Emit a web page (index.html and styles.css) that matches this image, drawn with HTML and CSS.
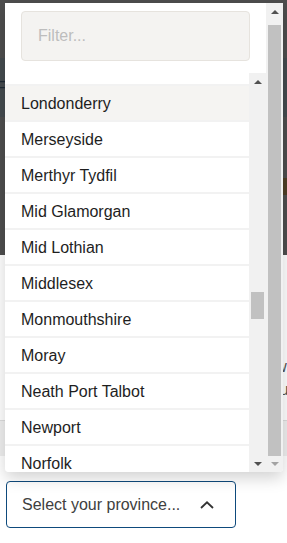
FILE: index.html
```html
<!DOCTYPE html>
<html lang="en">

<head>
    <meta charset="UTF-8">
    <meta name="viewport" content="width=device-width, initial-scale=1.0">
    <title>Province</title>
    <link rel="stylesheet" href="styles.css">
</head>

<body>
    <header class="hero">
        <div class="hero-band"><span class="hero-text">Free delivery on every order</span></div>
        <div class="hero-offer"><span class="hero-badge"></span></div>
    </header>

    <section class="content">
        <h2 class="content-title">Find your nearest store</h2>
        <p class="content-text">Choose a province from the list below and we<br>will show the shops that deliver to your area.</p>
        <div class="content-box"></div>
    </section>

    <div class="province">
        <div class="province-menu">
            <div class="menu-main">
                <input type="text" class="menu-filter" placeholder="Filter...">
                <div class="menu-list">
                    <ul class="menu-items">
                        <li class="menu-item menu-item-first">Lincolnshire</li>
                        <li class="menu-item is-active">Londonderry</li>
                        <li class="menu-item">Merseyside</li>
                        <li class="menu-item">Merthyr Tydfil</li>
                        <li class="menu-item">Mid Glamorgan</li>
                        <li class="menu-item">Mid Lothian</li>
                        <li class="menu-item">Middlesex</li>
                        <li class="menu-item">Monmouthshire</li>
                        <li class="menu-item">Moray</li>
                        <li class="menu-item">Neath Port Talbot</li>
                        <li class="menu-item">Newport</li>
                        <li class="menu-item">Norfolk</li>
                    </ul>
                    <div class="scrollbar scrollbar-inner">
                        <span class="scrollbar-btn"><span class="arrow-up"></span></span>
                        <span class="scrollbar-track"><span class="scrollbar-thumb"></span></span>
                        <span class="scrollbar-btn"><span class="arrow-down"></span></span>
                    </div>
                </div>
            </div>
            <div class="scrollbar scrollbar-outer">
                <span class="scrollbar-btn"><span class="arrow-up"></span></span>
                <span class="scrollbar-track"><span class="scrollbar-thumb"></span></span>
                <span class="scrollbar-btn"><span class="arrow-down is-disabled"></span></span>
            </div>
        </div>

        <button type="button" class="province-select">
            <span>Select your province...</span>
            <svg width="14" height="8" viewBox="0 0 14 8">
                <polyline points="1,7 7,1.3 13,7" fill="none" stroke="#333" stroke-width="1.8"/>
            </svg>
        </button>
    </div>
</body>

</html>
```

FILE: styles.css
```css
/* Página */
* {
    box-sizing: border-box;
    margin: 0;
    padding: 0;
}

body {
    font-family: "Liberation Sans", Arial, sans-serif;
    background-color: #fff;
    overflow: hidden;
}

/* Fundo */
.hero {
    height: 255px;
    background-color: #4e4e4e;
    padding-top: 58px;
}

.hero-band {
    height: 59px;
    background-color: #454b4f;
    display: flex;
    align-items: center;
    overflow: hidden;
    white-space: nowrap;
}

.hero-text {
    margin-left: -4px;
    font-size: 16px;
    color: #1e2a34;
}

.hero-offer {
    display: flex;
    justify-content: flex-end;
    margin-top: 61px;
}

.hero-badge {
    width: 40px;
    height: 17px;
    background-color: #4f3f26;
    border-left: 2px solid #8a6d35;
}

.content {
    height: 226px;
    padding: 68px 0 0 20px;
    overflow: hidden;
    white-space: nowrap;
    color: #222;
}

.content-title {
    font-size: 18px;
    line-height: 18px;
    font-weight: 700;
}

.content-text {
    margin-top: 14px;
    font-size: 16px;
    line-height: 23px;
    color: #555;
}

.content-box {
    margin: 19px 0 0 -20px;
    height: 36px;
    background-color: #efefef;
    border-top: 1px solid #dcdcdc;
}

/* Seletor */
.province {
    position: relative;
    padding-left: 6px;
}

.province-menu {
    position: absolute;
    left: 5px;
    bottom: calc(100% + 9px);
    width: 278px;
    height: 469px;
    display: flex;
    background-color: #fff;
    border-radius: 0 0 4px 4px;
    box-shadow: 0 6px 16px rgba(0, 0, 0, 0.18);
    overflow: hidden;
}

.menu-main {
    width: 261px;
    display: flex;
    flex-direction: column;
}

.menu-filter {
    margin: 8px 16px 12px;
    height: 50px;
    padding: 0 16px;
    background-color: #f4f3f1;
    border: 1px solid #e6e3de;
    border-radius: 4px;
    font-family: "Liberation Sans", Arial, sans-serif;
    font-size: 16px;
    color: #333;
    outline: none;
}

.menu-filter::placeholder {
    color: #bdbdbd;
}

.menu-list {
    flex: 1;
    min-height: 0;
    display: flex;
}

.menu-items {
    flex: 1;
    overflow: hidden;
    list-style: none;
    background-color: #f2f2f2;
}

.menu-item {
    height: 34px;
    margin-bottom: 2px;
    padding: 2px 0 0 16px;
    display: flex;
    align-items: center;
    background-color: #fff;
    font-size: 16px;
    color: #1e1e1e;
}

.menu-item-first {
    margin-top: -23px;
}

.menu-item.is-active {
    background-color: #f5f4f2;
}

/* Barras de rolagem */
.scrollbar {
    width: 17px;
    display: flex;
    flex-direction: column;
    background-color: #f1f1f1;
}

.scrollbar-btn {
    height: 17px;
    display: flex;
    align-items: center;
    justify-content: center;
}

.scrollbar-track {
    flex: 1;
    display: flex;
    flex-direction: column;
    align-items: center;
}

.scrollbar-thumb {
    width: 13px;
    background-color: #c1c1c1;
}

.scrollbar-outer .scrollbar-thumb {
    flex: 1;
    margin-top: 5px;
    margin-bottom: -1px;
}

.scrollbar-inner .scrollbar-thumb {
    height: 27px;
    margin-top: 202px;
}

.arrow-up {
    border-left: 4px solid transparent;
    border-right: 4px solid transparent;
    border-bottom: 4px solid #505050;
}

.arrow-down {
    border-left: 4px solid transparent;
    border-right: 4px solid transparent;
    border-top: 4px solid #505050;
}

.arrow-down.is-disabled {
    border-top-color: #a3a3a3;
}

.province-select {
    width: 230px;
    height: 47px;
    padding: 0 21px 0 15px;
    display: flex;
    align-items: center;
    justify-content: space-between;
    background-color: #fff;
    border: 1px solid #0e4a7c;
    border-radius: 4px;
    font-family: "Liberation Sans", Arial, sans-serif;
    font-size: 16px;
    color: #404040;
    cursor: pointer;
}
```
